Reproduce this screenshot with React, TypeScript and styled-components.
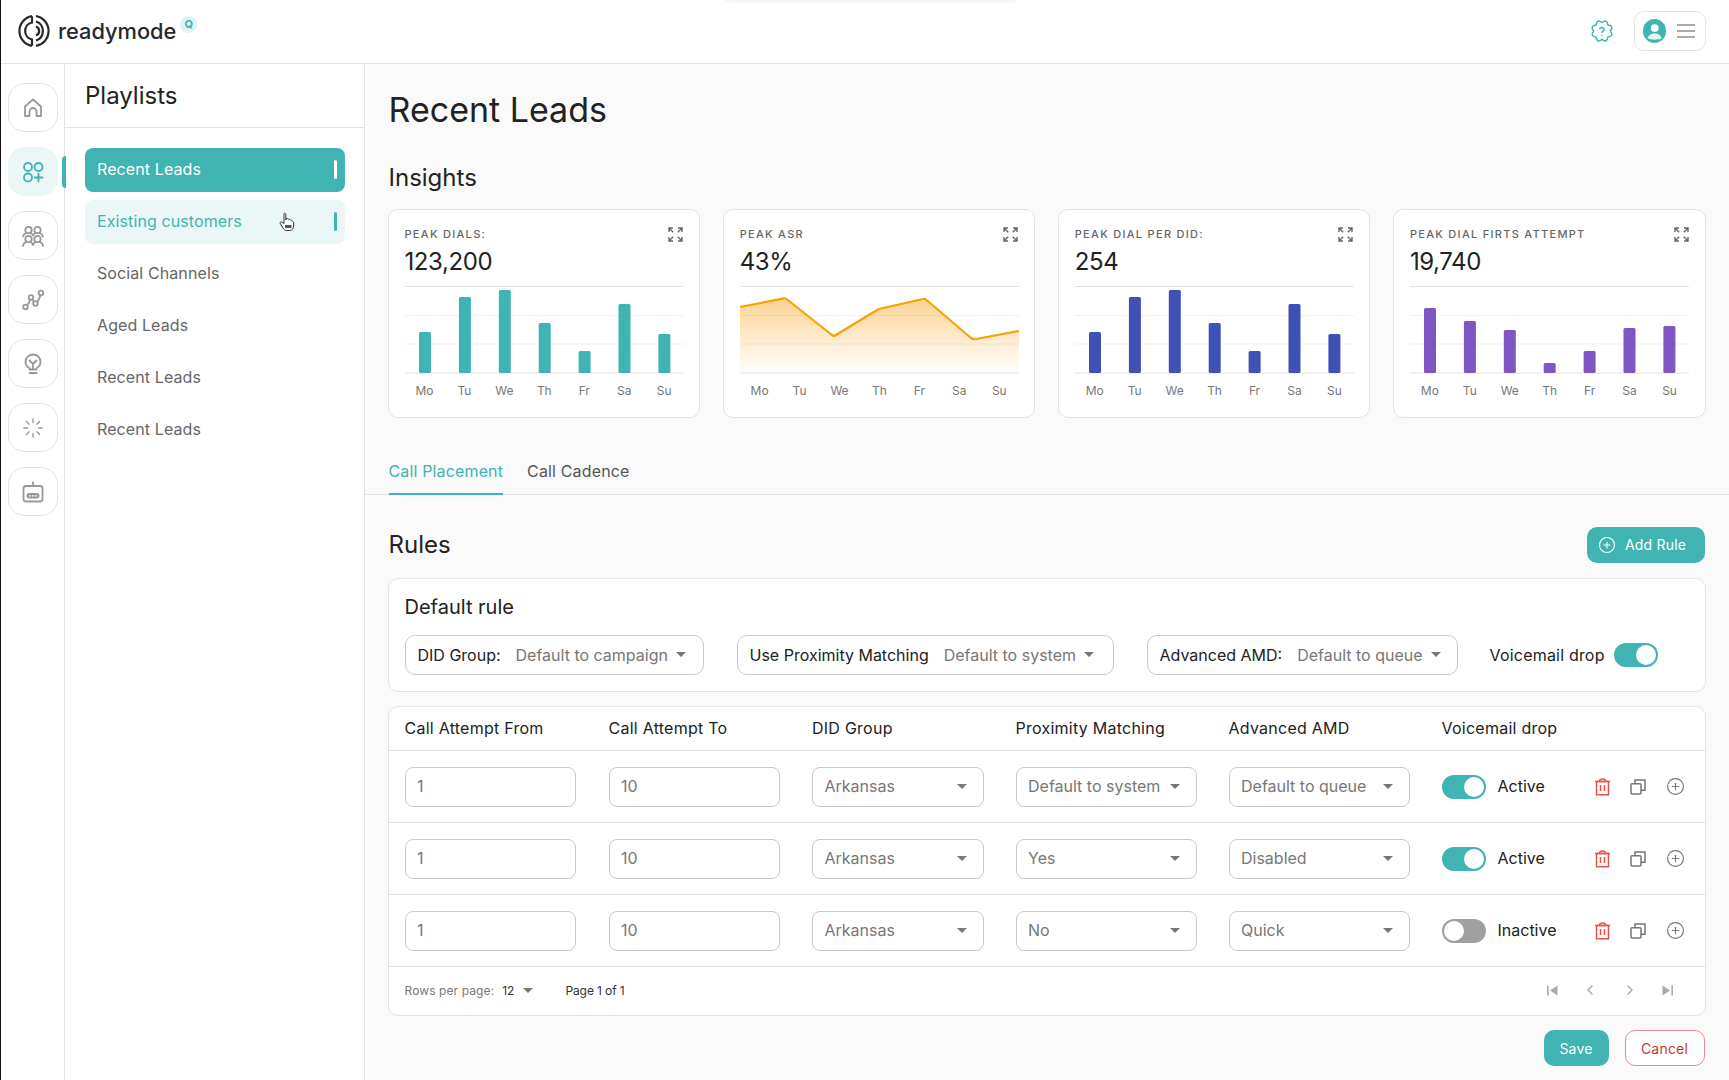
import React from 'react'
import styled, { createGlobalStyle } from 'styled-components'
import { ChevronLeft, ChevronRight, CirclePlus, Loader } from 'lucide-react'

const teal = '#40b4b2'
const line = '#e3e3e3'

const GlobalStyle = createGlobalStyle`
  html, body {
    margin: 0;
    padding: 0;
    background: #fff;
  }
  * {
    box-sizing: border-box;
  }
  body {
    font-family: Inter, "Noto Sans", "Liberation Sans", sans-serif;
    color: #222;
  }
`

const Page = styled.div`
  display: flex;
  flex-direction: column;
  width: 1729px;
  height: 1080px;
  overflow: hidden;
  border-left: 1px solid #111;
  background: #fff;
`

const TopBar = styled.header`
  position: relative;
  display: flex;
  align-items: center;
  flex: 0 0 64px;
  padding: 0 23px 1px 16px;
  border-bottom: 1px solid ${line};
`

const TopShadow = styled.div`
  position: absolute;
  top: 0;
  left: 724px;
  width: 290px;
  height: 5px;
  background: linear-gradient(#f4f4f4, #fff);
  border-radius: 0 0 50% 50%;
`

const Brand = styled.div`
  display: flex;
  align-items: center;
  gap: 7px;
`

const BrandName = styled.span`
  font-size: 21.8px;
  font-weight: 500;
  color: #26282b;
`

const QBadge = styled.span`
  display: flex;
  align-items: center;
  justify-content: center;
  width: 17px;
  height: 17px;
  margin: -14px 0 0 -3px;
  border-radius: 50%;
  background: #dff3f2;
  color: ${teal};
  font-size: 11px;
  font-weight: 700;
`

const TopActions = styled.div`
  display: flex;
  align-items: center;
  gap: 20px;
  margin-left: auto;
`

const UserBox = styled.div`
  display: flex;
  align-items: center;
  gap: 11px;
  width: 72px;
  height: 40px;
  padding: 0 10px 0 8px;
  border: 1px solid ${line};
  border-radius: 10px;
`

const Avatar = styled.div`
  display: flex;
  align-items: center;
  justify-content: center;
  width: 24px;
  height: 24px;
  border-radius: 50%;
  background: ${teal};
  overflow: hidden;
`

const Burger = styled.div`
  display: flex;
  flex-direction: column;
  gap: 4px;
  width: 18px;

  span {
    height: 2px;
    background: #aaa;
  }
`

const Body = styled.div`
  display: flex;
  flex: 1;
  min-height: 0;
`

const Rail = styled.nav`
  display: flex;
  flex-direction: column;
  gap: 14.6px;
  flex: 0 0 64px;
  padding: 19px 0 0 7px;
  border-right: 1px solid ${line};
`

const RailButton = styled.div<{ $active?: boolean }>`
  position: relative;
  display: flex;
  align-items: center;
  justify-content: center;
  width: 50px;
  height: 49.4px;
  border-radius: 17px;
  border: 1px solid ${({ $active }) => ($active ? '#eaf7f6' : line)};
  background: ${({ $active }) => ($active ? '#eaf7f6' : '#fff')};
  color: ${({ $active }) => ($active ? teal : '#999')};
`

const RailMarker = styled.span`
  position: absolute;
  top: 8px;
  left: 53px;
  width: 4px;
  height: 32px;
  border-radius: 4px 0 0 4px;
  background: ${teal};
`

const SidePanel = styled.aside`
  flex: 0 0 300px;
  border-right: 1px solid ${line};
`

const PanelHead = styled.div`
  display: flex;
  align-items: center;
  height: 64px;
  padding-left: 20px;
  border-bottom: 1px solid ${line};
  font-size: 24px;
  font-weight: 400;
`

const PanelList = styled.div`
  display: flex;
  flex-direction: column;
  gap: 8px;
  padding: 20px 19px 0 20px;
`

const PanelItem = styled.div<{ $state?: 'active' | 'hover' }>`
  position: relative;
  display: flex;
  align-items: center;
  justify-content: space-between;
  height: 44px;
  padding: 0 8px 2px 12px;
  border-radius: 8px;
  font-size: 16px;
  letter-spacing: 0.1px;
  background: ${({ $state }) => ($state === 'active' ? teal : $state === 'hover' ? '#ebf7f6' : 'transparent')};
  color: ${({ $state }) => ($state === 'active' ? '#fff' : $state === 'hover' ? teal : '#666')};
`

const ItemMark = styled.span<{ $light?: boolean }>`
  width: 3px;
  height: 19px;
  border-radius: 2px;
  background: ${({ $light }) => ($light ? '#fff' : teal)};
`

const Cursor = styled.svg`
  position: absolute;
  top: 12px;
  left: 194px;
`

const Main = styled.main`
  flex: 1;
  min-width: 0;
  background: #fafafa;
`

const Section = styled.section`
  padding: 0 23.5px 0 22.5px;
`

const PageTitle = styled.h1`
  margin: 23.5px 0 0 1px;
  font-size: 34px;
  line-height: 44px;
  font-weight: 400;
`

const SectionTitle = styled.h2`
  margin: 0 0 0 1px;
  font-size: 24px;
  line-height: 30px;
  font-weight: 400;
`

const InsightsTitle = styled(SectionTitle)`
  margin: 31.5px 0 16px 1px;
`

const CardGrid = styled.div`
  display: grid;
  grid-template-columns: repeat(4, minmax(0, 1fr));
  gap: 22.5px;
`

const Card = styled.div`
  height: 209px;
  padding: 15px 15px 0 16px;
  background: #fff;
  border: 1px solid ${line};
  border-radius: 10px;
`

const CardHead = styled.div`
  display: flex;
  align-items: center;
  justify-content: space-between;
  height: 18px;
  padding-right: 1px;
  color: #666;
`

const CardLabel = styled.span`
  font-size: 11px;
  font-weight: 500;
  letter-spacing: 1.3px;
  text-transform: uppercase;
`

const CardValue = styled.div`
  margin-top: 3px;
  font-size: 24px;
  letter-spacing: -0.4px;
  line-height: 32px;
  color: #222;
`

const ChartSvg = styled.svg`
  display: block;
  margin-top: 8px;
  width: 279px;
  height: 88px;
`

const DayRow = styled.div`
  display: grid;
  grid-template-columns: repeat(7, 1fr);
  margin-top: 9px;
  font-size: 12px;
  line-height: 16px;
  text-align: center;
  color: #777;
`

const Tabs = styled.div`
  display: flex;
  gap: 24px;
  margin-top: 33px;
  padding-left: 23.5px;
  border-bottom: 1px solid ${line};
`

const Tab = styled.div<{ $active?: boolean }>`
  display: flex;
  align-items: center;
  height: 44px;
  padding-bottom: 3px;
  margin-bottom: -1px;
  font-size: 16px;
  letter-spacing: 0.15px;
  color: ${({ $active }) => ($active ? teal : '#555')};
  border-bottom: 2px solid ${({ $active }) => ($active ? teal : 'transparent')};
`

const RulesHead = styled.div`
  display: flex;
  align-items: center;
  justify-content: space-between;
  margin: 32px 0 15px;
`

const PrimaryButton = styled.button`
  display: flex;
  align-items: center;
  justify-content: center;
  gap: 9px;
  height: 36px;
  border: 0;
  border-radius: 10px;
  background: ${teal};
  color: #fff;
  font: inherit;
  font-size: 14px;
  letter-spacing: 0.2px;
`

const AddButton = styled(PrimaryButton)`
  width: 118px;
  margin-right: 1px;
  padding: 0 7px 1px 0;
`

const SaveButton = styled(PrimaryButton)`
  width: 65px;
`

const CancelButton = styled.button`
  width: 80px;
  height: 36px;
  border: 1px solid #e48f8a;
  border-radius: 10px;
  background: #fff;
  color: #c8362c;
  font: inherit;
  font-size: 14px;
  letter-spacing: 0.2px;
`

const DefaultCard = styled.div`
  height: 114px;
  padding: 15px 16px 0;
  background: #fff;
  border: 1px solid ${line};
  border-radius: 10px;
`

const DefaultTitle = styled.div`
  font-size: 20px;
  line-height: 27px;
`

const DefaultRow = styled.div`
  display: flex;
  align-items: center;
  margin-top: 14px;
`

const FieldBox = styled.div<{ $width: number; $gap: number }>`
  display: flex;
  align-items: center;
  width: ${({ $width }) => $width}px;
  height: 40px;
  margin-right: ${({ $gap }) => $gap}px;
  padding: 0 12px 1px;
  border: 1px solid #c9c9c9;
  border-radius: 10px;
  font-size: 16px;
  white-space: nowrap;
`

const FieldLabel = styled.span`
  margin-right: 15px;
  color: #222;
`

const FieldValue = styled.span`
  margin-right: 8px;
  color: #777;
`

const Caret = styled.span`
  width: 0;
  height: 0;
  border-left: 5px solid transparent;
  border-right: 5px solid transparent;
  border-top: 5px solid #777;
`

const SwitchLabel = styled.span`
  margin-right: 9px;
  padding-bottom: 1px;
  font-size: 16px;
  letter-spacing: 0.2px;
`

const Switch = styled.span<{ $on: boolean }>`
  display: flex;
  justify-content: ${({ $on }) => ($on ? 'flex-end' : 'flex-start')};
  flex: 0 0 44px;
  height: 24px;
  padding: 2px;
  border-radius: 12px;
  background: ${({ $on }) => ($on ? teal : '#a0a0a0')};

  &::after {
    content: '';
    width: 20px;
    height: 20px;
    border-radius: 50%;
    background: #fff;
  }
`

const TableCard = styled.div`
  margin-top: 14px;
  height: 310px;
  background: #fff;
  border: 1px solid ${line};
  border-radius: 10px;
`

const columns = '204px 203.5px 203.5px 213px 213px 1fr'

const HeadRow = styled.div`
  display: grid;
  grid-template-columns: ${columns};
  align-items: center;
  height: 44px;
  padding: 0 0 2px 16px;
  border-bottom: 1px solid ${line};
  font-size: 16px;
  letter-spacing: 0.25px;
`

const Row = styled.div`
  display: grid;
  grid-template-columns: ${columns};
  align-items: center;
  height: 72px;
  padding-left: 16px;
  border-bottom: 1px solid ${line};
`

const CellBox = styled.div<{ $width: number }>`
  display: flex;
  align-items: center;
  justify-content: space-between;
  width: ${({ $width }) => $width}px;
  height: 40px;
  padding: 0 16px 1px 11.5px;
  border: 1px solid #c9c9c9;
  border-radius: 8px;
  font-size: 16px;
  color: #777;
  white-space: nowrap;
`

const StatusCell = styled.div`
  display: flex;
  align-items: center;
  gap: 12px;
  font-size: 16px;
`

const StatusText = styled.span`
  flex: 0 0 84px;
  padding-bottom: 1px;
`

const RowIcons = styled.div`
  display: flex;
  align-items: center;
  gap: 19.5px;
  color: #777;
`

const TableFooter = styled.div`
  display: flex;
  align-items: center;
  height: 48px;
  padding: 0 32px 2px 16px;
  font-size: 12px;
`

const RowsLabel = styled.span`
  color: #777;
  margin-right: 8px;
  letter-spacing: 0.1px;
`

const RowsValue = styled.span`
  margin-right: 9px;
  color: #333;
`

const PageText = styled.span`
  margin-left: 32px;
  letter-spacing: -0.1px;
  color: #333;
`

const Pager = styled.div`
  display: flex;
  align-items: center;
  gap: 23.8px;
  margin-left: auto;
  color: #aaa;
`

const Actions = styled.div`
  display: flex;
  justify-content: flex-end;
  gap: 16px;
  margin: 14px 1px 0 0;
`

const Stroke = ({ size = 24, children }: { size?: number; children: React.ReactNode }) => (
  <svg width={size} height={size} viewBox="0 0 24 24" fill="none" stroke="currentColor" strokeWidth="1.8" strokeLinecap="round" strokeLinejoin="round">
    {children}
  </svg>
)

const Logo = () => (
  <svg width="34" height="32" viewBox="0 0 34 32" fill="none" stroke="#26282b" strokeWidth="2.2">
    <path d="M15 1.2A15 15 0 0 0 15 30.8" />
    <path d="M15 1.2V7.5A8.7 8.7 0 0 0 15 24.5V30.8" />
    <path d="M19 1.2A15 15 0 0 1 19 30.8" />
    <path d="M19 6.5A10 10 0 0 1 19 25.5" />
    <path d="M19 11.5A4.8 4.8 0 0 1 19 20.5" />
  </svg>
)

// eight-lobed outline of the help badge in the header
const badgePath = (() => {
  const point = (angle: number, r: number) =>
    `${(12 + r * Math.cos((angle * Math.PI) / 180)).toFixed(2)} ${(12 + r * Math.sin((angle * Math.PI) / 180)).toFixed(2)}`
  let d = `M${point(0, 8.4)}`
  for (let i = 0; i < 8; i++) {
    d += `Q${point(i * 45 + 22.5, 13.4)} ${point((i + 1) * 45, 8.4)}`
  }
  return `${d}Z`
})()

const HelpBadge = () => (
  <svg width="24" height="24" viewBox="0 0 24 24" fill="none" stroke={teal} strokeWidth="1.5" strokeLinecap="round" strokeLinejoin="round">
    <path d={badgePath} />
    <path d="M9.8 9.8A2.3 2.3 0 0 1 14.2 10.4C14.2 12 12 12.2 12 13.6" />
    <path d="M12 16.2H12.01" />
  </svg>
)

const HomeIcon = () => (
  <Stroke>
    <path d="M4 20V10.5L12 3.5L20 10.5V20H15.5V15.5A3.5 3.5 0 0 0 8.5 15.5V20Z" />
  </Stroke>
)

const AppsIcon = () => (
  <Stroke>
    <circle cx="7" cy="7" r="4" />
    <circle cx="17.5" cy="7" r="4" />
    <circle cx="7" cy="17.5" r="4" />
    <path d="M17.5 13.5V21.5M13.5 17.5H21.5" />
  </Stroke>
)

const TeamIcon = () => (
  <Stroke>
    <circle cx="7.5" cy="6" r="3.2" />
    <circle cx="16.5" cy="6" r="3.2" />
    <circle cx="7.5" cy="15" r="3.2" />
    <circle cx="16.5" cy="15" r="3.2" />
    <path d="M2 12.5C2.5 10.5 4 9.5 5 9.2M22 12.5C21.5 10.5 20 9.5 19 9.2M10 9.2C11 9.8 11.7 10.5 12 11.5C12.3 10.5 13 9.8 14 9.2" />
    <path d="M2 22C2.3 19.5 4 18.5 5 18.2M10 18.2C11 18.8 11.7 19.5 12 21C12.3 19.5 13 18.8 14 18.2M22 22C21.7 19.5 20 18.5 19 18.2" />
  </Stroke>
)

const PathIcon = () => (
  <Stroke>
    <circle cx="4.5" cy="19" r="2.3" />
    <circle cx="10" cy="9.5" r="2.3" />
    <circle cx="14.5" cy="15.5" r="2.3" />
    <circle cx="20" cy="5" r="2.3" />
    <path d="M6 17.2C8 15.5 8.8 13.5 9 11.7M11.3 11.5L13 13.6M16.3 13.8C18 12 18.8 9.5 19.3 7.2" />
  </Stroke>
)

const BulbIcon = () => (
  <Stroke>
    <path d="M8.5 17.5V16.2C6 14.8 4.5 12.5 4.5 10A7.5 7.5 0 0 1 19.5 10C19.5 12.5 18 14.8 15.5 16.2V17.5Z" />
    <path d="M8.5 8.5L12 12L15.5 8.5M12 12V17" />
    <path d="M8.5 21H15.5" />
  </Stroke>
)

const BotIcon = () => (
  <Stroke>
    <path d="M12 2.5V6" />
    <rect x="2.5" y="6" width="19" height="15.5" rx="2.5" />
    <rect x="5.5" y="13" width="13" height="5.5" rx="2.7" fill="currentColor" stroke="none" />
    <path d="M9 15.8H9.01M12 15.8H12.01M15 15.8H15.01" stroke="#fff" />
  </Stroke>
)

const ExpandIcon = () => (
  <svg width="15" height="15" viewBox="0 0 15 15" fill="none" stroke="#666" strokeWidth="1.4">
    <path d="M1 5V1H5M1 1L5.2 5.2M10 1H14V5M14 1L9.8 5.2M1 10V14H5M1 14L5.2 9.8M14 10V14H10M14 14L9.8 9.8" />
  </svg>
)

const TrashIcon = () => (
  <svg width="17" height="18" viewBox="0 0 17 18" fill="none" stroke="#e5534b" strokeWidth="1.5">
    <path d="M1 3.5H16M5.5 3.2C5.5 1.5 6.5 1 8.5 1S11.5 1.5 11.5 3.2" />
    <path d="M2.5 3.5V16.8H14.5V3.5Z" />
    <path d="M6.5 7V13M10.5 7V13" />
  </svg>
)

const CopyIcon = () => (
  <svg width="16" height="16" viewBox="0 0 16 16" fill="none" stroke="#777" strokeWidth="1.5">
    <rect x="1" y="4.8" width="10" height="10.2" rx="1" />
    <path d="M5 4.8V1H15V11.2H11" />
  </svg>
)

const FirstIcon = ({ flip }: { flip?: boolean }) => (
  <svg width="11" height="11" viewBox="0 0 11 11" fill="currentColor" style={flip ? { transform: 'scaleX(-1)' } : undefined}>
    <rect x="0" y="0.5" width="1.6" height="10" />
    <path d="M10.5 0.5V10.5L3 5.5Z" />
  </svg>
)

const PersonIcon = () => (
  <svg width="24" height="24" viewBox="0 0 24 24" fill="#fff">
    <circle cx="12" cy="9" r="4" />
    <path d="M4.8 19.5C5.5 16 8.5 14.5 12 14.5S18.5 16 19.2 19.5C17.5 20.5 15 21 12 21S6.5 20.5 4.8 19.5Z" opacity="0.85" />
  </svg>
)

const grids = [0, 29, 57.5, 86.5]

const BarChart = ({ values, color }: { values: number[]; color: string }) => (
  <ChartSvg viewBox="0 0 279 88" preserveAspectRatio="none">
    {grids.map((y, i) => (
      <line key={y} x1="0" x2="279" y1={y + 0.5} y2={y + 0.5} stroke={i === 1 || i === 2 ? '#f0f0f0' : '#e4e4e4'} strokeWidth="1.2" />
    ))}
    {values.map((h, i) => (
      <rect key={i} x={14 + i * 39.9} y={87 - h} width="12" height={h} rx="1.5" fill={color} />
    ))}
  </ChartSvg>
)

const areaPoints = 'M0 21L44 12.3Q45.5 12 46.5 13L92 49Q94 50.5 96 49L137 24Q139 23 141 22.5L183 13Q185 12.5 186.5 14L231 52Q233 53.5 236 53L279 45'

const AreaChart = () => (
  <ChartSvg viewBox="0 0 279 88" preserveAspectRatio="none">
    <defs>
      <linearGradient id="asrFill" x1="0" x2="0" y1="0" y2="1">
        <stop offset="0" stopColor="#f9a825" stopOpacity="0.5" />
        <stop offset="1" stopColor="#f9a825" stopOpacity="0" />
      </linearGradient>
    </defs>
    {grids.map((y, i) => (
      <line key={y} x1="0" x2="279" y1={y + 0.5} y2={y + 0.5} stroke={i === 1 || i === 2 ? '#f0f0f0' : '#e4e4e4'} strokeWidth="1.2" />
    ))}
    <path d={`${areaPoints}V87H0Z`} fill="url(#asrFill)" />
    <path d={areaPoints} fill="none" stroke="#f5a300" strokeWidth="2.2" />
  </ChartSvg>
)

const days = ['Mo', 'Tu', 'We', 'Th', 'Fr', 'Sa', 'Su']
const tealBars = [41, 76, 83, 50, 22, 69, 39]
const purpleBars = [65, 52, 43, 10, 22, 45, 47]

const insights = [
  { label: 'Peak dials:', value: '123,200', chart: <BarChart values={tealBars} color={teal} /> },
  { label: 'Peak ASR', value: '43%', chart: <AreaChart /> },
  { label: 'Peak dial per DID:', value: '254', chart: <BarChart values={tealBars} color="#3f51b5" /> },
  { label: 'Peak dial firts attempt', value: '19,740', chart: <BarChart values={purpleBars} color="#7e57c2" /> }
]

const playlists = ['Social Channels', 'Aged Leads', 'Recent Leads', 'Recent Leads']

const rules = [
  { proximity: 'Default to system', amd: 'Default to queue', on: true },
  { proximity: 'Yes', amd: 'Disabled', on: true },
  { proximity: 'No', amd: 'Quick', on: false }
]

const SelectCell = ({ value, width }: { value: string; width: number }) => (
  <CellBox $width={width}>
    {value}
    <Caret />
  </CellBox>
)

export default function App() {
  return (
    <Page>
      <GlobalStyle />
      <TopBar>
        <TopShadow />
        <Brand>
          <Logo />
          <BrandName>readymode</BrandName>
          <QBadge>Q</QBadge>
        </Brand>
        <TopActions>
          <HelpBadge />
          <UserBox>
            <Avatar>
              <PersonIcon />
            </Avatar>
            <Burger>
              <span />
              <span />
              <span />
            </Burger>
          </UserBox>
        </TopActions>
      </TopBar>

      <Body>
        <Rail>
          <RailButton>
            <HomeIcon />
          </RailButton>
          <RailButton $active>
            <AppsIcon />
            <RailMarker />
          </RailButton>
          <RailButton>
            <TeamIcon />
          </RailButton>
          <RailButton>
            <PathIcon />
          </RailButton>
          <RailButton>
            <BulbIcon />
          </RailButton>
          <RailButton>
            <Loader size={22} strokeWidth={1.5} />
          </RailButton>
          <RailButton>
            <BotIcon />
          </RailButton>
        </Rail>

        <SidePanel>
          <PanelHead>Playlists</PanelHead>
          <PanelList>
            <PanelItem $state="active">
              Recent Leads
              <ItemMark $light />
            </PanelItem>
            <PanelItem $state="hover">
              Existing customers
              <Cursor width="16" height="20" viewBox="0 0 16 20">
                <path
                  d="M5 1.5C5.8 1 6.8 1.5 6.8 2.5V8L7.5 6.5C8.3 6.2 9 6.5 9.2 7.3C10 6.9 10.8 7.2 11 8C11.8 7.7 12.8 8.2 13 9.2C13.8 9.2 14.6 9.8 14.6 11V14C14.6 16.5 13 18.5 10.5 18.5H8C6 18.5 5 17.5 4 16L1.2 11.5C0.8 10.5 2 9.3 3 10L5 11.5V2.5Z"
                  fill="#fff"
                  stroke="#333"
                  strokeWidth="1"
                />
                <rect x="6" y="13" width="6.5" height="3" fill="#555" />
              </Cursor>
              <ItemMark />
            </PanelItem>
            {playlists.map((name, i) => (
              <PanelItem key={i}>{name}</PanelItem>
            ))}
          </PanelList>
        </SidePanel>

        <Main>
          <Section>
            <PageTitle>Recent Leads</PageTitle>
            <InsightsTitle>Insights</InsightsTitle>
            <CardGrid>
              {insights.map(card => (
                <Card key={card.label}>
                  <CardHead>
                    <CardLabel>{card.label}</CardLabel>
                    <ExpandIcon />
                  </CardHead>
                  <CardValue>{card.value}</CardValue>
                  {card.chart}
                  <DayRow>
                    {days.map(day => (
                      <span key={day}>{day}</span>
                    ))}
                  </DayRow>
                </Card>
              ))}
            </CardGrid>
          </Section>

          <Tabs>
            <Tab $active>Call Placement</Tab>
            <Tab>Call Cadence</Tab>
          </Tabs>

          <Section>
            <RulesHead>
              <SectionTitle>Rules</SectionTitle>
              <AddButton>
                <CirclePlus size={18} strokeWidth={1.5} />
                Add Rule
              </AddButton>
            </RulesHead>

            <DefaultCard>
              <DefaultTitle>Default rule</DefaultTitle>
              <DefaultRow>
                <FieldBox $width={299.5} $gap={32.5}>
                  <FieldLabel>DID Group:</FieldLabel>
                  <FieldValue>Default to campaign</FieldValue>
                  <Caret />
                </FieldBox>
                <FieldBox $width={377.5} $gap={32.5}>
                  <FieldLabel>Use Proximity Matching</FieldLabel>
                  <FieldValue>Default to system</FieldValue>
                  <Caret />
                </FieldBox>
                <FieldBox $width={311} $gap={32}>
                  <FieldLabel>Advanced AMD:</FieldLabel>
                  <FieldValue>Default to queue</FieldValue>
                  <Caret />
                </FieldBox>
                <SwitchLabel>Voicemail drop</SwitchLabel>
                <Switch $on />
              </DefaultRow>
            </DefaultCard>

            <TableCard>
              <HeadRow>
                <span>Call Attempt From</span>
                <span>Call Attempt To</span>
                <span>DID Group</span>
                <span>Proximity Matching</span>
                <span>Advanced AMD</span>
                <span>Voicemail drop</span>
              </HeadRow>
              {rules.map((rule, i) => (
                <Row key={i}>
                  <CellBox $width={171.5}>1</CellBox>
                  <CellBox $width={171.5}>10</CellBox>
                  <SelectCell value="Arkansas" width={172} />
                  <SelectCell value={rule.proximity} width={181} />
                  <SelectCell value={rule.amd} width={181} />
                  <StatusCell>
                    <Switch $on={rule.on} />
                    <StatusText>{rule.on ? 'Active' : 'Inactive'}</StatusText>
                    <RowIcons>
                      <TrashIcon />
                      <CopyIcon />
                      <CirclePlus size={19} strokeWidth={1.5} />
                    </RowIcons>
                  </StatusCell>
                </Row>
              ))}
              <TableFooter>
                <RowsLabel>Rows per page:</RowsLabel>
                <RowsValue>12</RowsValue>
                <Caret />
                <PageText>Page 1 of 1</PageText>
                <Pager>
                  <FirstIcon />
                  <ChevronLeft size={16} strokeWidth={2.2} />
                  <ChevronRight size={16} strokeWidth={2.2} />
                  <FirstIcon flip />
                </Pager>
              </TableFooter>
            </TableCard>

            <Actions>
              <SaveButton>Save</SaveButton>
              <CancelButton>Cancel</CancelButton>
            </Actions>
          </Section>
        </Main>
      </Body>
    </Page>
  )
}
